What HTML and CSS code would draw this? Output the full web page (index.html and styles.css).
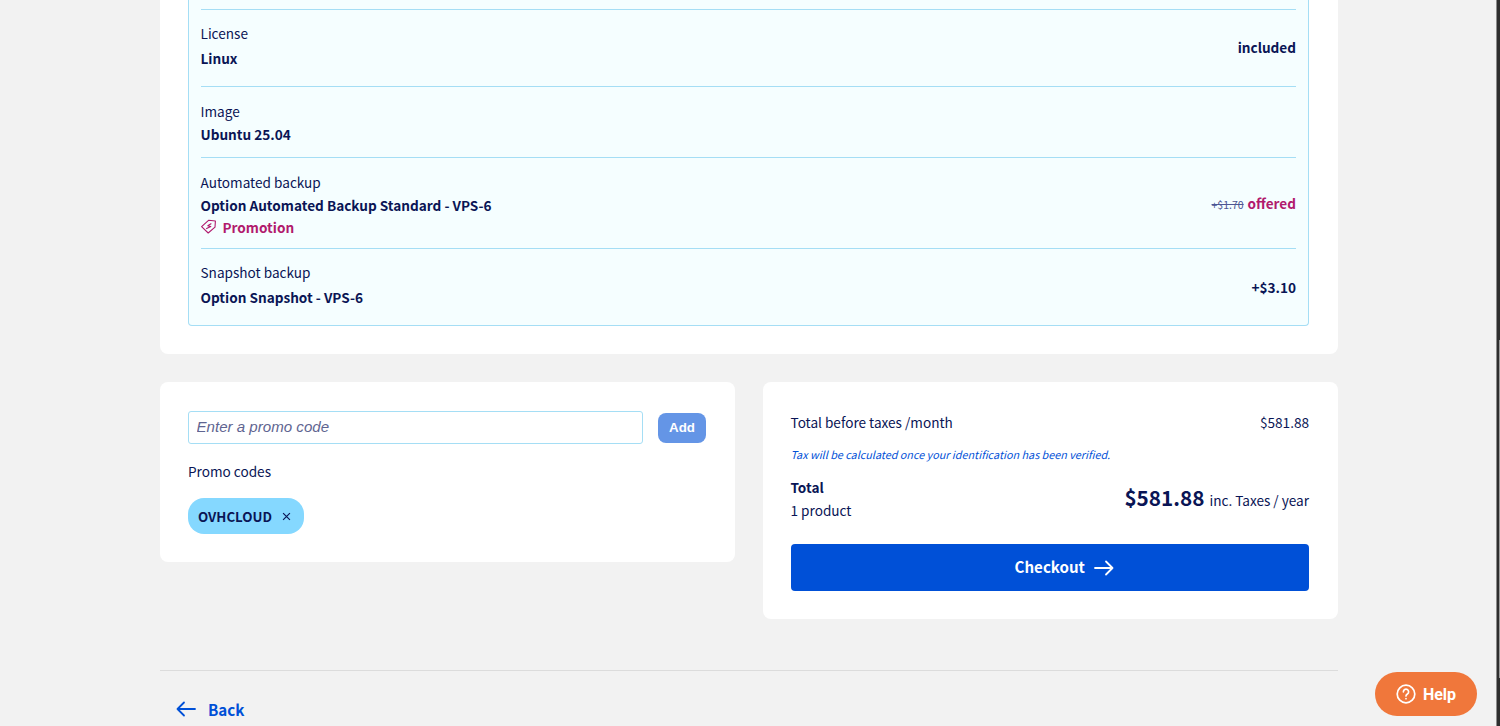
FILE: index.html
```html
<!DOCTYPE html>
<html lang="en">
<head>
<meta charset="utf-8">
<title>Checkout</title>
<link rel="stylesheet" href="styles.css">
</head>
<body>
<main class="page">
  <section class="card config">
    <div class="details">
      <div class="row row-cut"></div>
      <div class="row row-license">
        <div class="row-left">
          <div class="label">License</div>
          <div class="value">Linux</div>
        </div>
        <div class="price">included</div>
      </div>
      <div class="row row-image">
        <div class="row-left">
          <div class="label">Image</div>
          <div class="value">Ubuntu 25.04</div>
        </div>
      </div>
      <div class="row row-backup">
        <div class="row-left">
          <div class="label">Automated backup</div>
          <div class="value">Option Automated Backup Standard - VPS-6</div>
          <div class="promo">
            <svg class="promo-icon" viewBox="0 0 15 15" width="15" height="15" fill="none" stroke="currentColor" stroke-width="1.1" stroke-linejoin="round" stroke-linecap="round"><path d="M.6 7.6 7.8 1.2 14.4 2 14 8.2 7.2 14Z"/><path d="M5.6 9.6 9.8 7.6 6.8 6.8 10 4.8"/></svg>
            <span>Promotion</span>
          </div>
        </div>
        <div class="price price-offer"><s class="old">+$1.70</s><span>offered</span></div>
      </div>
      <div class="row row-snapshot">
        <div class="row-left">
          <div class="label">Snapshot backup</div>
          <div class="value">Option Snapshot - VPS-6</div>
        </div>
        <div class="price">+$3.10</div>
      </div>
    </div>
  </section>

  <div class="columns">
    <section class="card promo-card">
      <div class="promo-form">
        <input class="promo-input" type="text" placeholder="Enter a promo code">
        <button class="add-btn" type="button">Add</button>
      </div>
      <div class="promo-title">Promo codes</div>
      <div class="chip"><span class="chip-text">OVHCLOUD</span>
        <svg viewBox="0 0 10 10" width="9" height="9" fill="none" stroke="currentColor" stroke-width="1.3"><path d="M1.2 1.2 8.8 8.8M8.8 1.2 1.2 8.8"/></svg>
      </div>
    </section>

    <section class="card summary">
      <div class="sum-line">
        <span>Total before taxes /month</span>
        <span>$581.88</span>
      </div>
      <p class="tax-note">Tax will be calculated once your identification has been verified.</p>
      <div class="total-row">
        <div>
          <div class="total-title">Total</div>
          <div class="total-sub">1 product</div>
        </div>
        <div class="total-price"><strong>$581.88</strong> inc. Taxes / year</div>
      </div>
      <button class="checkout" type="button"><span class="checkout-text">Checkout</span>
        <svg viewBox="0 0 20 16" width="20" height="16" fill="none" stroke="currentColor" stroke-width="1.8" stroke-linecap="round" stroke-linejoin="round"><path d="M1 8h17.5M12 1.5 18.5 8 12 14.5"/></svg>
      </button>
    </section>
  </div>

  <footer class="page-foot">
    <a class="back" href="#">
      <svg viewBox="0 0 20 16" width="20" height="16" fill="none" stroke="currentColor" stroke-width="1.8" stroke-linecap="round" stroke-linejoin="round"><path d="M19 8H1.5M8 1.5 1.5 8 8 14.5"/></svg>
      <span>Back</span>
    </a>
  </footer>
</main>

<button class="help" type="button">
  <svg viewBox="0 0 20 20" width="20" height="20" fill="none" stroke="currentColor" stroke-width="1.7" stroke-linecap="round"><circle cx="10" cy="10" r="8.8"/><path d="M7.4 7.8a2.6 2.6 0 1 1 4 2.2c-.9.6-1.4 1-1.4 2"/><path d="M10 14.6v.1"/></svg>
  <span>Help</span>
</button>
<div class="scroll-edge"><div class="scroll-thumb"></div></div>
</body>
</html>
```

FILE: styles.css
```css
* { box-sizing: border-box; }

html, body {
  margin: 0;
  height: 726px;
  overflow: hidden;
  background: #f2f2f2;
}

body {
  font-family: "Noto Sans CJK SC", "Noto Sans", "Liberation Sans", sans-serif;
  font-size: 13.6px;
  line-height: 24px;
  color: #0a1555;
}

.page {
  width: 1178px;
  margin: 0 auto 0 160px;
  display: flex;
  flex-direction: column;
}

.card {
  background: #fff;
  border-radius: 8px;
}

.config {
  padding: 0 29px 28px 28px;
  border-radius: 0 0 8px 8px;
}

.details {
  background: #f5feff;
  border: 1px solid #a5def5;
  border-top: 0;
  border-radius: 0 0 4px 4px;
  padding: 0 12px 0 11.5px;
}

.row {
  display: flex;
  justify-content: space-between;
  align-items: center;
  border-bottom: 1px solid #a5def5;
}

.row:last-child { border-bottom: 0; }

.row-cut { height: 10px; }
.row-license { height: 77px; }
.row-image { height: 71px; }
.row-backup { height: 91px; }
.row-snapshot { height: 76px; }

.row-left { display: flex; flex-direction: column; }
.row-license .row-left { margin-bottom: 6px; }
.row-license .price { margin-bottom: 3px; }
.row-image .value { margin-top: -1px; }
.row-backup .value { margin-top: -1px; }
.row-snapshot .row-left { margin-bottom: 5px; }

.label { line-height: 24px; }

.value {
  font-weight: 700;
  line-height: 24px;
}

.row-license .value,
.row-snapshot .value { margin-top: 1px; }

.price {
  font-weight: 700;
  line-height: 24px;
}

.price-offer {
  display: flex;
  align-items: baseline;
  gap: 4px;
  margin-top: 1px;
  color: #b11a6d;
}

.old {
  font-size: 10.5px;
  font-weight: 400;
  color: #4d5693;
}

.promo {
  display: flex;
  align-items: center;
  gap: 7px;
  color: #b11a6d;
  font-weight: 700;
  line-height: 20px;
}

.columns {
  display: grid;
  grid-template-columns: 575px 575.5px;
  column-gap: 27.5px;
  align-items: start;
  margin-top: 28px;
}

.promo-card { padding: 29px 28px 28px; }

.promo-form {
  display: flex;
  align-items: center;
  gap: 15px;
}

.promo-input {
  width: 455px;
  height: 33px;
  padding: 0 8px 2px 7.5px;
  border: 1px solid #a5def5;
  border-radius: 3px;
  background: #fff;
  font-family: "Liberation Sans", sans-serif;
  font-size: 15.1px;
  font-style: italic;
  color: #000e4e;
}

.promo-input::placeholder {
  color: #5f6591;
  opacity: 1;
}

.add-btn {
  width: 48px;
  height: 30px;
  border: 0;
  border-radius: 8px;
  background: #6495e6;
  color: #fff;
  font-family: "Liberation Sans", sans-serif;
  font-size: 13.33px;
  font-weight: 700;
  padding: 0;
}

.promo-title {
  margin-top: 15px;
  line-height: 24px;
}

.chip {
  display: inline-flex;
  align-items: center;
  gap: 10px;
  height: 36px;
  margin-top: 15px;
  padding: 0 13px 0 10px;
  border-radius: 16px;
  background: #85d8ff;
  font-size: 13.3px;
  font-weight: 700;
  line-height: 24px;
}

.chip-text { padding-top: 2px; }

.summary { padding: 28px 29px 28px 28px; height: 237px; }

.sum-line {
  display: flex;
  justify-content: space-between;
  line-height: 24px;
}

.tax-note {
  margin: 12px 0 0;
  font-size: 10.8px;
  line-height: 16px;
  font-style: italic;
  color: #0050d7;
}

.total-row {
  display: flex;
  justify-content: space-between;
  align-items: center;
  margin-top: 13px;
}

.total-title { font-weight: 700; line-height: 24px; }
.total-sub { line-height: 24px; margin-top: -1px; }

.total-price { line-height: 28px; }
.total-price strong {
  font-size: 20.7px;
  font-weight: 700;
  margin-right: 2px;
}

.checkout {
  display: flex;
  align-items: center;
  justify-content: center;
  gap: 9px;
  width: 100%;
  height: 47px;
  margin-top: 22px;
  padding: 0 0 0 29px;
  border: 0;
  border-radius: 4px;
  background: #0050d7;
  color: #fff;
  font-family: inherit;
  font-size: 15.1px;
  font-weight: 700;
}

.checkout-text { margin-top: -3px; }

.page-foot {
  margin-top: 51px;
  border-top: 1px solid #dcdcdc;
  padding: 26px 16px 0;
}

.back {
  display: flex;
  align-items: center;
  gap: 12px;
  color: #0050d7;
  font-size: 15.2px;
  font-weight: 700;
  text-decoration: none;
  line-height: 24px;
}

.help {
  position: fixed;
  left: 1375px;
  top: 672px;
  width: 102px;
  height: 44px;
  display: flex;
  align-items: center;
  justify-content: center;
  gap: 7px;
  padding: 0;
  border: 0;
  border-radius: 22px;
  background: #f0773b;
  color: #fff;
  font-family: "Roboto", "Liberation Sans", sans-serif;
  font-size: 16px;
  font-weight: 700;
}

.scroll-edge {
  position: fixed;
  right: 0;
  top: 0;
  bottom: 0;
  width: 4px;
  background: #2e2e2e;
  border-left: 1px solid #8c8c8c;
}

.scroll-thumb {
  position: absolute;
  right: 0;
  top: 340px;
  bottom: 48px;
  width: 1px;
  background: #9a9a9a;
}
```
